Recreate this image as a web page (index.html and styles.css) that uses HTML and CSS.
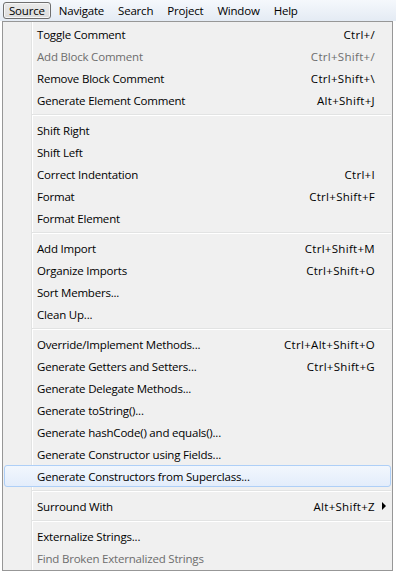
FILE: index.html
```html
<!DOCTYPE html>
<html>
<head>
  <meta charset="UTF-8">
  <title>Source menu</title>
  <link rel="stylesheet" href="styles.css">
</head>
<body>
<div class="menubar">
  <span class="bar-item open">Source</span>
  <span class="bar-item">Navigate</span>
  <span class="bar-item">Search</span>
  <span class="bar-item">Project</span>
  <span class="bar-item">Window</span>
  <span class="bar-item">Help</span>
</div>

<div class="menu">
  <div class="item"><span>Toggle Comment</span><span class="key">Ctrl+/</span><span></span></div>
  <div class="item disabled"><span>Add Block Comment</span><span class="key">Ctrl+Shift+/</span><span></span></div>
  <div class="item"><span>Remove Block Comment</span><span class="key">Ctrl+Shift+\</span><span></span></div>
  <div class="item"><span>Generate Element Comment</span><span class="key">Alt+Shift+J</span><span></span></div>
  <div class="sep"></div>
  <div class="item"><span>Shift Right</span><span class="key"></span><span></span></div>
  <div class="item"><span>Shift Left</span><span class="key"></span><span></span></div>
  <div class="item"><span>Correct Indentation</span><span class="key">Ctrl+I</span><span></span></div>
  <div class="item"><span>Format</span><span class="key">Ctrl+Shift+F</span><span></span></div>
  <div class="item"><span>Format Element</span><span class="key"></span><span></span></div>
  <div class="sep"></div>
  <div class="item"><span>Add Import</span><span class="key">Ctrl+Shift+M</span><span></span></div>
  <div class="item"><span>Organize Imports</span><span class="key">Ctrl+Shift+O</span><span></span></div>
  <div class="item"><span>Sort Members...</span><span class="key"></span><span></span></div>
  <div class="item"><span>Clean Up...</span><span class="key"></span><span></span></div>
  <div class="sep"></div>
  <div class="item"><span>Override/Implement Methods...</span><span class="key">Ctrl+Alt+Shift+O</span><span></span></div>
  <div class="item"><span>Generate Getters and Setters...</span><span class="key">Ctrl+Shift+G</span><span></span></div>
  <div class="item"><span>Generate Delegate Methods...</span><span class="key"></span><span></span></div>
  <div class="item"><span>Generate toString()...</span><span class="key"></span><span></span></div>
  <div class="item"><span>Generate hashCode() and equals()...</span><span class="key"></span><span></span></div>
  <div class="item"><span>Generate Constructor using Fields...</span><span class="key"></span><span></span></div>
  <div class="item hover"><span>Generate Constructors from Superclass...</span><span class="key"></span><span></span></div>
  <div class="sep"></div>
  <div class="item"><span>Surround With</span><span class="key">Alt+Shift+Z</span><span class="arrow"></span></div>
  <div class="sep"></div>
  <div class="item"><span>Externalize Strings...</span><span class="key"></span><span></span></div>
  <div class="item disabled"><span>Find Broken Externalized Strings</span><span class="key"></span><span></span></div>
</div>
</body>
</html>
```

FILE: styles.css
```css
body { margin: 0; background: #fff; font-family: "Open Sans", "Noto Sans", sans-serif; font-size: 11.5px; letter-spacing: -0.2px; color: #000; }

.menubar { display: flex; height: 21px; padding-left: 3px; box-sizing: border-box; background: linear-gradient(#f5f8fc, #e4ebf4); align-items: center; }
.bar-item { height: 17px; line-height: 16px; padding: 0 5px; margin-right: 2px; box-sizing: border-box; border: 1px solid transparent; border-radius: 3px; }
.bar-item.open { border-color: #6f6f6f; background: linear-gradient(#eaeaea, #dcdcdc); box-shadow: inset 0 0 0 1px #f6f6f6; }

.menu { margin-left: 2px; width: 391px; box-sizing: border-box; border: 1px solid #979797; padding: 1px;
  background: #f0f0f0 linear-gradient(to right, transparent 28px, #e2e3e3 28px, #e2e3e3 29px, #fff 29px, #fff 30px, transparent 30px) no-repeat; }

.item { display: grid; grid-template-columns: 1fr auto 15px; align-items: center; height: 22px; padding-left: 32px; box-sizing: border-box; border: 1px solid transparent; border-radius: 3px; }
.item .key { text-align: right; letter-spacing: 0.3px; }
.item.disabled { color: #6d6d6d; }
.item.hover { border-color: #aecff7; background: linear-gradient(#f2f7fd, #e3edfb); }

.arrow { justify-self: center; width: 0; height: 0; border-top: 4px solid transparent; border-bottom: 4px solid transparent; border-left: 4px solid #000; margin-left: 2px; }

.sep { height: 8px; margin-left: 28px; background: linear-gradient(transparent 3px, #e2e3e3 3px, #e2e3e3 4px, #fff 4px, #fff 5px, transparent 5px); }
```
